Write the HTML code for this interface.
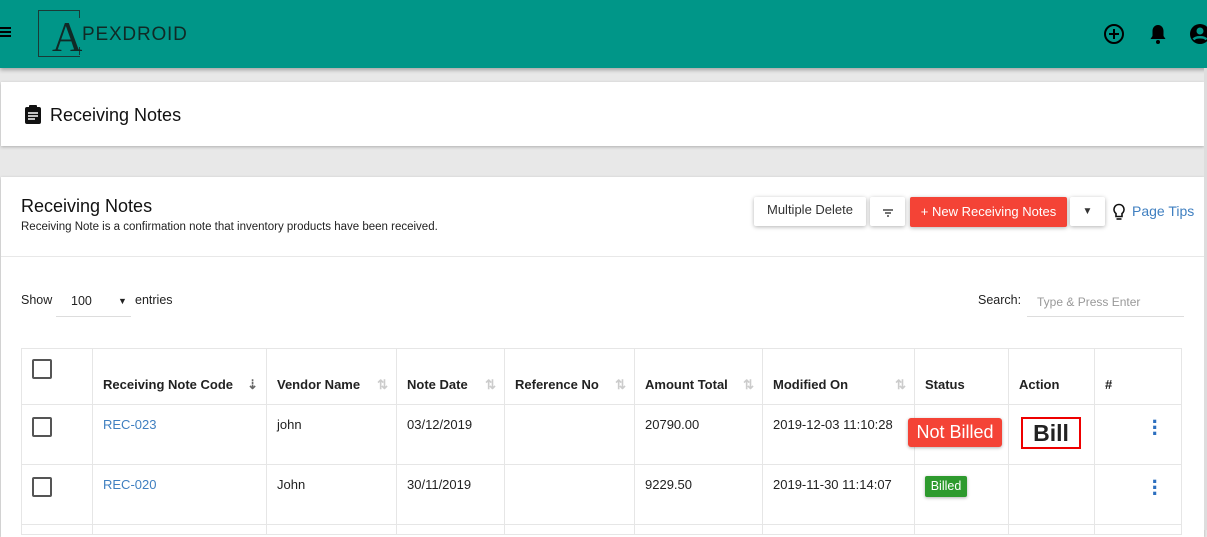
<html><head><style>
body{margin:0;width:1207px;height:530px;overflow:hidden;background:#e8e8e8;font-family:"Liberation Sans",Arial,sans-serif;position:relative;color:#222}
.a{position:absolute}
.top{left:0;top:0;width:1207px;height:68px;background:#009688;box-shadow:0 2px 4px rgba(0,0,0,.3)}
.card{background:#fff;box-shadow:0 1px 3px rgba(0,0,0,.25)}
.btn{background:#fff;box-shadow:0 1px 4px rgba(0,0,0,.3);border-radius:2px;font-size:13px;color:#333;text-align:center}
table{border-collapse:collapse;font-size:13px}
td,th{border:1px solid #e6e6e6;padding:0 0 0 10px;text-align:left;vertical-align:top}
th{font-weight:bold;vertical-align:top;padding-top:28px;position:relative}
.cb{width:16px;height:16px;border:2px solid #555;border-radius:2px;display:inline-block}
.s{position:absolute;right:8px;top:28px;color:#ccc;font-size:13px;font-weight:bold}
a{color:#3f7fc0;text-decoration:none}
.dots{color:#2c6fbf;font-size:22px;font-weight:bold;line-height:6px}
</style></head><body>
<div class="a top"></div>
<div class="a" style="left:0;top:27px;width:11px;height:2px;background:#000;box-shadow:0 4px 0 #000,0 8px 0 #000"></div>
<div class="a" style="left:38px;top:10px;width:41px;height:45px;border:1px solid #1a3a36;border-right:none"></div>
<div class="a" style="left:79px;top:10px;width:1px;height:8px;background:#1a3a36"></div>
<div class="a" style="left:79px;top:47px;width:1px;height:8px;background:#1a3a36"></div>
<div class="a" style="left:52px;top:14px;font-family:'Liberation Serif',serif;font-size:42px;color:#102a26">A</div>
<div class="a" style="left:82px;top:24px;font-size:19px;color:#102a26;letter-spacing:0.8px">PEXDROID</div>
<svg class="a" style="left:1103px;top:23px" width="22" height="22" viewBox="0 0 22 22"><circle cx="11" cy="11" r="9" fill="none" stroke="#000" stroke-width="2"/><path d="M11 6v10M6 11h10" stroke="#000" stroke-width="2"/></svg>
<svg class="a" style="left:1148px;top:23px" width="20" height="22" viewBox="0 0 20 22"><path d="M10 2c-3.5 0-5.5 3-5.5 6v5l-2 3h15l-2-3V8c0-3-2-6-5.5-6z" fill="#000"/><circle cx="10" cy="19" r="2" fill="#000"/></svg>
<svg class="a" style="left:1189px;top:23px" width="22" height="22" viewBox="0 0 22 22"><circle cx="11" cy="11" r="10" fill="#000"/><circle cx="11" cy="8" r="3.5" fill="#009688"/><path d="M4.5 16.5c2-3 11-3 13 0" stroke="#009688" stroke-width="2.5" fill="none"/></svg>
<div class="a card" style="left:1px;top:82px;width:1203px;height:64px"></div>
<svg class="a" style="left:24px;top:104px" width="18" height="20" viewBox="0 0 18 20"><rect x="1" y="3" width="16" height="17" rx="2" fill="#111"/><rect x="5" y="1" width="8" height="4" rx="1" fill="#111"/><path d="M4 9h10M4 12h10M4 15h7" stroke="#fff" stroke-width="1.6"/></svg>
<div class="a" style="left:50px;top:105px;font-size:18px;color:#111">Receiving Notes</div>
<div class="a card" style="left:1px;top:177px;width:1203px;height:360px"></div>
<div class="a" style="left:21px;top:196px;font-size:18px;color:#111">Receiving Notes</div>
<div class="a" style="left:21px;top:221px;font-size:11.5px;color:#222">Receiving Note is a confirmation note that inventory products have been received.</div>
<div class="a btn" style="left:754px;top:197px;width:112px;height:29px;line-height:26px">Multiple Delete</div>
<div class="a btn" style="left:870px;top:197px;width:35px;height:29px"><svg width="12" height="10" style="margin-top:12px" viewBox="0 0 12 10"><path d="M1 1h10M3 4h6M5 7h2" stroke="#222" stroke-width="1.3"/></svg></div>
<div class="a btn" style="left:910px;top:197px;width:157px;height:30px;line-height:30px;background:#f44336;color:#fff">+ New Receiving Notes</div>
<div class="a btn" style="left:1070px;top:197px;width:35px;height:29px;line-height:29px;font-size:10px">▼</div>
<svg class="a" style="left:1112px;top:203px" width="14" height="18" viewBox="0 0 14 18"><path d="M7 1.5a5 5 0 0 0-3 9v3h6v-3a5 5 0 0 0-3-9z" fill="none" stroke="#111" stroke-width="1.6"/><path d="M4.5 16h5" stroke="#111" stroke-width="1.6"/></svg>
<div class="a" style="left:1132px;top:203px;font-size:14px;color:#3f7fc0">Page Tips</div>
<div class="a" style="left:1px;top:256px;width:1203px;height:1px;background:#e8e8e8"></div>
<div class="a" style="left:21px;top:293px;font-size:12.5px">Show</div>
<div class="a" style="left:71px;top:294px;font-size:12.5px">100</div>
<div class="a" style="left:118px;top:296px;font-size:9px">▼</div>
<div class="a" style="left:56px;top:316px;width:75px;height:1px;background:#ddd"></div>
<div class="a" style="left:135px;top:293px;font-size:12.5px">entries</div>
<div class="a" style="left:978px;top:293px;font-size:12.5px">Search:</div>
<div class="a" style="left:1037px;top:295px;font-size:12px;color:#999">Type &amp; Press Enter</div>
<div class="a" style="left:1027px;top:316px;width:157px;height:1px;background:#ddd"></div>
<table class="a" style="left:21px;top:348px;width:1161px">
<tr style="height:56px"><th style="width:60px;padding-top:10px"><span class="cb"></span></th><th style="width:163px">Receiving Note Code<span class="s" style="color:#666">⇣</span></th><th style="width:119px">Vendor Name<span class="s">⇅</span></th><th style="width:97px">Note Date<span class="s">⇅</span></th><th style="width:119px">Reference No<span class="s">⇅</span></th><th style="width:117px">Amount Total<span class="s">⇅</span></th><th style="width:141px">Modified On<span class="s">⇅</span></th><th style="width:83px">Status</th><th style="width:75px">Action</th><th>#</th></tr>
<tr style="height:60px"><td style="padding-top:12px"><span class="cb"></span></td><td style="padding-top:12px"><a>REC-023</a></td><td style="padding-top:12px">john</td><td style="padding-top:12px">03/12/2019</td><td></td><td style="padding-top:12px">20790.00</td><td style="padding-top:12px">2019-12-03 11:10:28</td><td></td><td></td><td style="text-align:right;padding:14px 22px 0 0"><div class="dots">·<br>·<br>·</div></td></tr>
<tr style="height:60px"><td style="padding-top:12px"><span class="cb"></span></td><td style="padding-top:12px"><a>REC-020</a></td><td style="padding-top:12px">John</td><td style="padding-top:12px">30/11/2019</td><td></td><td style="padding-top:12px">9229.50</td><td style="padding-top:12px">2019-11-30 11:14:07</td><td></td><td></td><td style="text-align:right;padding:14px 22px 0 0"><div class="dots">·<br>·<br>·</div></td></tr>
<tr style="height:10px"><td></td><td></td><td></td><td></td><td></td><td></td><td></td><td></td><td></td><td></td></tr>
</table>
<div class="a" style="left:908px;top:418px;width:94px;height:29px;background:#f44336;border-radius:3px;color:#fff;font-size:18px;line-height:29px;text-align:center;box-shadow:0 1px 3px rgba(0,0,0,.3)">Not Billed</div>
<div class="a" style="left:1021px;top:417px;width:56px;height:28px;border:2px solid #e00;color:#222;font-size:23px;font-weight:bold;line-height:28px;text-align:center">Bill</div>
<div class="a" style="left:925px;top:476px;width:42px;height:21px;background:#2e9a2e;border-radius:2px;color:#fff;font-size:12.5px;line-height:21px;text-align:center;box-shadow:0 1px 3px rgba(0,0,0,.3)">Billed</div>
<div class="a" style="left:1204px;top:68px;width:3px;height:462px;background:#ddd"></div>
</body></html>
